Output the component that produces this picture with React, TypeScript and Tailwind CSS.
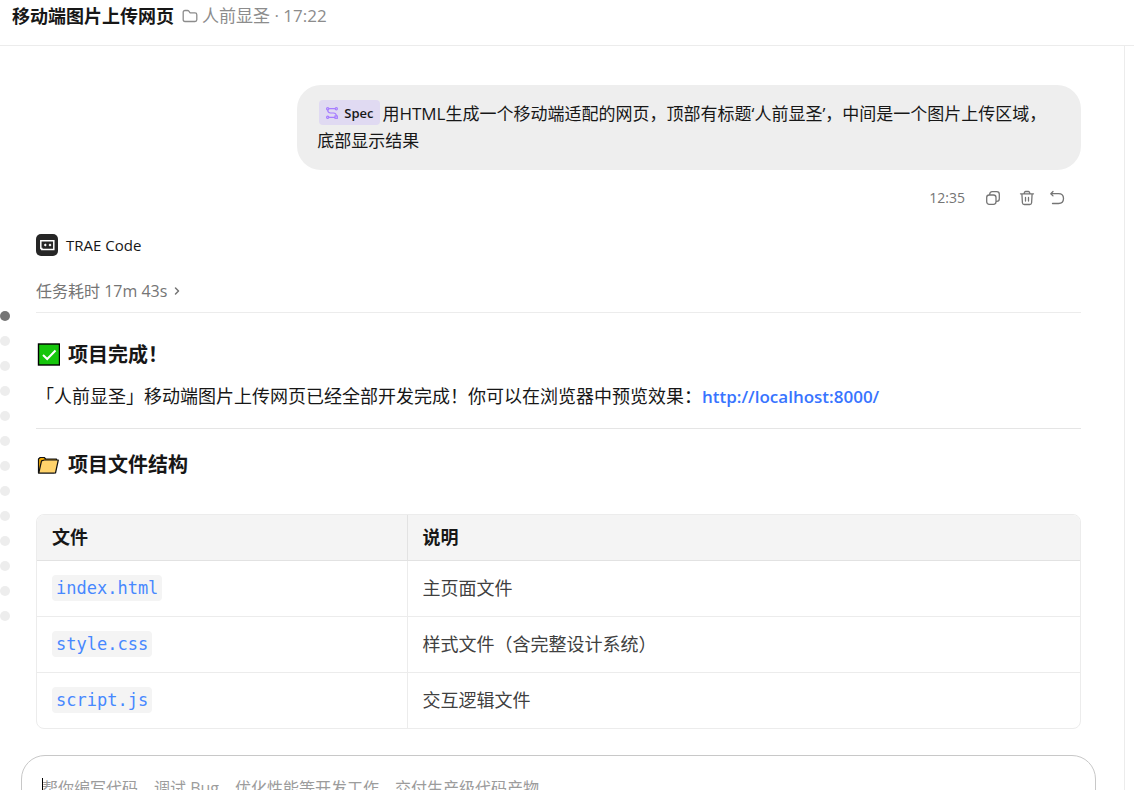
import React from 'react';
import { ChevronRight } from 'lucide-react';

const files = [
  { name: 'index.html', description: '主页面文件' },
  { name: 'style.css', description: '样式文件（含完整设计系统）' },
  { name: 'script.js', description: '交互逻辑文件' }
];

const messages = Array.from({ length: 13 }, (_, i) => i);

const FolderOutline = () => (
  <svg className="w-4 h-4" viewBox="0 0 16 16" fill="none" stroke="currentColor" strokeWidth="1.3" strokeLinejoin="round">
    <path d="M1.2 4.3c0-1.2.7-1.8 1.8-1.8h2.4c.7 0 1.1.2 1.5.7l.8 1.1c.3.4.7.6 1.2.6H13c1.2 0 1.8.7 1.8 1.8v5c0 1.2-.7 1.8-1.8 1.8H3c-1.2 0-1.8-.7-1.8-1.8V4.3Z" />
  </svg>
);

const SpecIcon = () => (
  <svg className="w-3 h-3" viewBox="0 0 12 12" fill="none" stroke="#a67cff" strokeWidth="1.2">
    <circle cx="1.7" cy="1.7" r="1.1" />
    <circle cx="10.3" cy="1.7" r="1.1" />
    <circle cx="1.7" cy="10.3" r="1.1" />
    <rect x="9" y="9" width="2.3" height="2.3" />
    <path d="M2.8 1.7h6.4M1.7 2.8c0 2.2.8 3.2 2.8 3.2h3c2 0 2.8 1 2.8 3M2.8 10.3H9" />
  </svg>
);

const CopyIcon = () => (
  <svg className="w-4 h-4" viewBox="0 0 16 16" fill="none" stroke="currentColor" strokeWidth="1.3">
    <rect x="1.7" y="5" width="9.3" height="9.3" rx="2.5" />
    <path d="M4.7 5V4.2c0-1.5.9-2.5 2.5-2.5h4.5c1.6 0 2.6 1 2.6 2.6v4.4c0 1.6-1 2.6-2.6 2.6H11" />
  </svg>
);

const TrashIcon = () => (
  <svg className="w-4 h-4" viewBox="0 0 16 16" fill="none" stroke="currentColor" strokeWidth="1.3" strokeLinecap="round">
    <path d="M1.5 3.8h13M5 3.6l.7-1.5c.2-.4.5-.6.9-.6h2.8c.4 0 .7.2.9.6l.7 1.5M2.9 4l.5 8.7c.1 1.1.8 1.8 1.9 1.8h5.4c1.1 0 1.8-.7 1.9-1.8l.5-8.7M6.5 7.5v3.5M9.5 7.5v3.5" />
  </svg>
);

const UndoIcon = () => (
  <svg className="w-4 h-4" viewBox="0 0 16 16" fill="none" stroke="currentColor" strokeWidth="1.3" strokeLinecap="round" strokeLinejoin="round">
    <path d="M4 1.5 1.8 3.7 4 5.9M2 3.7h7.5c3 0 5 1.9 5 4.9s-2 4.9-5 4.9H3.5" />
  </svg>
);

const TraeLogo = () => (
  <svg className="w-[22px] h-[22px]" viewBox="0 0 22 22" fill="none">
    <rect width="22" height="22" rx="5" fill="#262626" />
    <path d="M4.8 6.8h13v8.7H5.8v-1H4.8Z" stroke="#fff" strokeWidth="1.5" />
    <path d="m9.3 9.5 1.5 1.5-1.5 1.5L7.8 11ZM14 9.5l1.5 1.5-1.5 1.5-1.5-1.5Z" fill="#fff" />
  </svg>
);

const CheckEmoji = () => (
  <svg className="w-6 h-6" viewBox="0 0 24 24" fill="none">
    <rect x="2.5" y="1" width="21" height="21" fill="#16c60c" stroke="#000" strokeWidth="1.4" />
    <path d="m7 12 4.2 4 8.300-8.500" stroke="#fff" strokeWidth="2" />
  </svg>
);

const FolderEmoji = () => (
  <svg className="w-6 h-6" viewBox="0 0 24 24" stroke="#111" strokeWidth="1.2" strokeLinejoin="round">
    <path d="M2.5 20V6l1.7-1.5h4L9.7 6h10.8v3L18 20Z" fill="#f2a900" />
    <path d="M2.8 20 5.5 7.8l2.8-.8h14l-2.8 13Z" fill="#ffd36b" />
  </svg>
);

const App: React.FC = () => {
  return (
    <div className="flex flex-col h-screen overflow-hidden bg-white text-[#171717] font-['Open_Sans','Noto_Sans_CJK_SC',sans-serif]">
      {/* Header */}
      <header className="flex items-start shrink-0 h-[46px] px-3 pt-1 border-b border-[#ececec] leading-6">
        <h1 className="text-lg leading-6 font-bold">移动端图片上传网页</h1>
        <div className="flex items-center gap-1 ml-2 text-[17px] text-[#8c8c8c]">
          <FolderOutline />
          <span>人前显圣 · 17:22</span>
        </div>
      </header>

      <div className="flex flex-1 min-h-0 pr-[9px]">
        <div className="flex flex-1 min-w-0 border-r border-[#ececec]">
          {/* Message rail */}
          <nav className="flex flex-col gap-[15px] shrink-0 w-[21px] pt-[265px]">
            {messages.map(i => (
              <button
                key={i}
                aria-label={`消息 ${i + 1}`}
                className={`w-[10px] h-[10px] shrink-0 rounded-full ${i === 0 ? 'bg-[#757575]' : 'bg-[#ededed]'}`}
              />
            ))}
          </nav>

          <main className="flex-1 min-w-0 pr-7">
            <div className="px-[15px] pt-[39px]">
              {/* User message */}
              <div className="w-3/4 ml-auto px-5 pt-[15px] pb-4 rounded-3xl bg-[#eeeeee] text-[17px] leading-[27px]">
                <span className="inline-flex items-center gap-[6px] h-[25px] px-[7px] mx-[2px] rounded bg-[#e0daf2] text-[13px] leading-5 font-semibold align-top">
                  <SpecIcon />
                  Spec
                </span>
                用HTML生成一个移动端适配的网页，顶部有标题‘人前显圣’，中间是一个图片上传区域，底部显示结果
              </div>
              <div className="flex items-center justify-end h-6 mt-4 pr-4 text-[#757575] text-sm">
                <span className="mr-5">12:35</span>
                <button aria-label="复制" className="mr-[18px]"><CopyIcon /></button>
                <button aria-label="删除" className="mr-[14px]"><TrashIcon /></button>
                <button aria-label="撤回"><UndoIcon /></button>
              </div>

              {/* Assistant message */}
              <div className="flex items-center gap-2 h-6 mt-[23px] text-[15px]">
                <TraeLogo />
                <span>TRAE Code</span>
              </div>
              <div className="pt-5 pb-2 border-b border-[#ececec]">
                <button className="flex items-center gap-1 h-[27px] text-base text-[#757575]">
                  任务耗时 17m 43s
                  <ChevronRight className="w-3 h-3" strokeWidth={3} />
                </button>
              </div>

              <h2 className="flex items-center gap-2 h-7 mt-7 text-xl font-bold">
                <CheckEmoji />
                项目完成！
              </h2>
              <p className="mt-[13px] text-lg leading-7 whitespace-nowrap">
                「人前显圣」移动端图片上传网页已经全部开发完成！你可以在浏览器中预览效果：
                <a href="http://localhost:8000/" className="text-[17px] font-semibold text-[#3874ff]">http://localhost:8000/</a>
              </p>
              <hr className="mt-[17px] border-[#e5e5e5]" />
              <h2 className="flex items-center gap-2 h-7 mt-[22px] text-xl font-bold">
                <FolderEmoji />
                项目文件结构
              </h2>

              <div className="mt-[35px] border border-[#ececec] rounded-lg overflow-hidden">
                <table className="w-full table-fixed text-left text-lg leading-7">
                  <thead>
                    <tr className="h-[45px] bg-[#f4f4f4] border-b border-[#e2e2e2]">
                      <th className="w-[370px] px-[15px] font-bold border-r border-[#e2e2e2]">文件</th>
                      <th className="px-[15px] font-bold">说明</th>
                    </tr>
                  </thead>
                  <tbody>
                    {files.map(file => (
                      <tr key={file.name} className="h-14 border-b border-[#ececec] last:border-b-0">
                        <td className="px-[15px] border-r border-[#ececec]">
                          <code className="block w-fit px-1 rounded bg-[#f4f4f4] text-[17px] leading-[26px] text-[#4788ff] font-['DejaVu_Sans_Mono',monospace]">
                            {file.name}
                          </code>
                        </td>
                        <td className="px-[15px] text-[#404040]">{file.description}</td>
                      </tr>
                    ))}
                  </tbody>
                </table>
              </div>
            </div>

            {/* Composer */}
            <div className="relative mt-[26px] px-5 pt-5 border border-[#c8c8c8] rounded-3xl bg-white">
              <span className="absolute left-5 top-[22px] w-px h-5 bg-black" />
              <textarea
                aria-label="消息"
                placeholder="帮你编写代码、调试 Bug、优化性能等开发工作、交付生产级代码产物"
                className="block w-full h-24 resize-none outline-none text-base leading-6 placeholder:text-[#9c9c9c]"
              />
            </div>
          </main>
        </div>
      </div>
    </div>
  );
};

export default App;
